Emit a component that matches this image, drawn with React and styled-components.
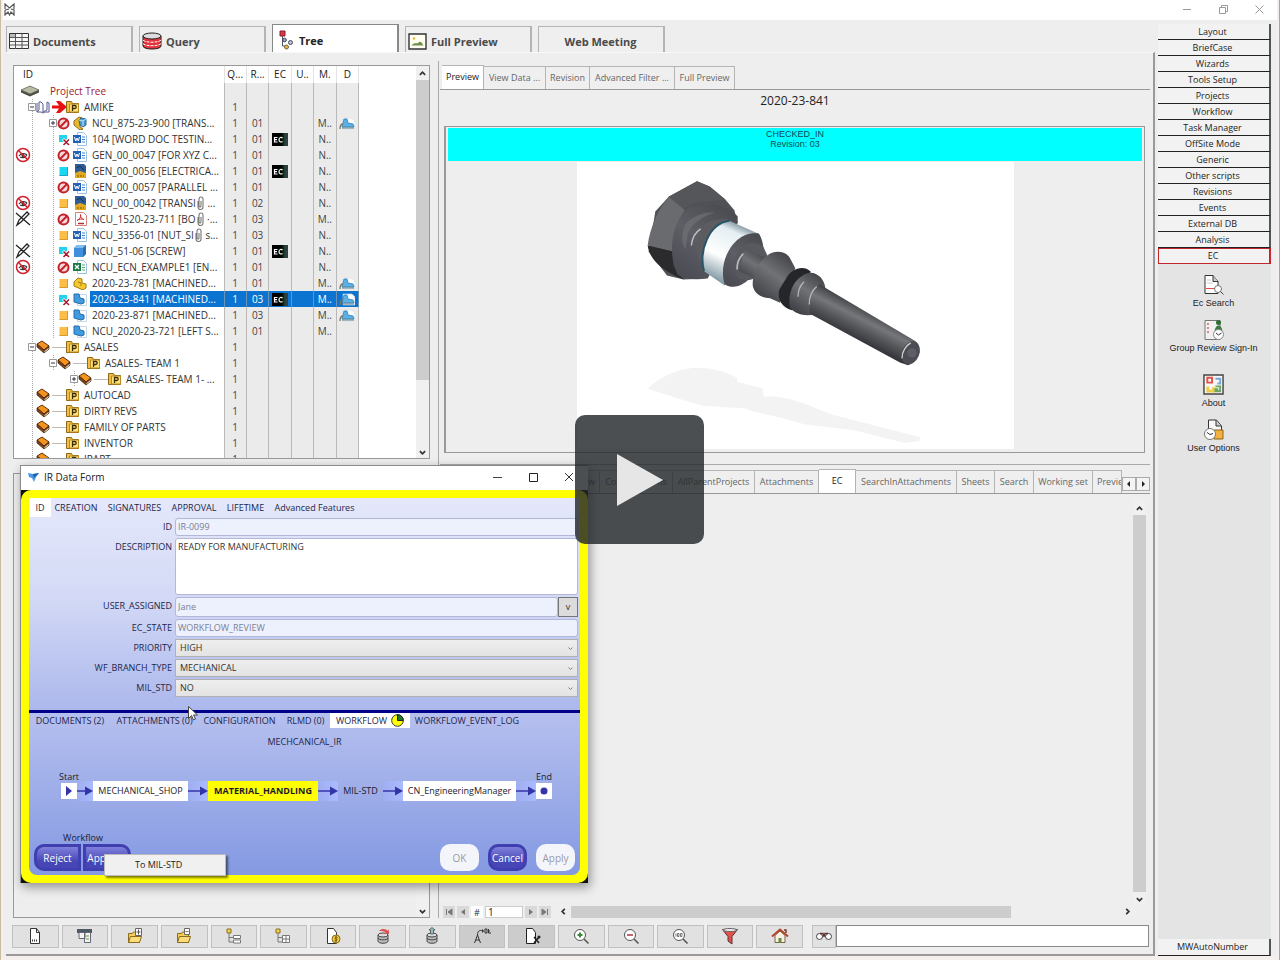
import React from "react";
import styled, { createGlobalStyle, css } from "styled-components";

const ui = '"Open Sans", "Noto Sans", sans-serif';
const plain = '"Liberation Sans", Arial, sans-serif';

const GlobalStyle = createGlobalStyle`
  * { box-sizing: border-box; }
  body { margin: 0; background: #f3e9e6; font-family: ${ui}; font-size: 10px; color: #222; }
  button, input, select, textarea { font: inherit; color: inherit; margin: 0; padding: 0; border-radius: 0; }
  svg { display: block; flex: none; }
`;

/* ---------- window frame ---------- */

const Desktop = styled.div`
  display: flex;
  flex-direction: column;
  min-height: 100vh;
  padding: 0 2px 4px 2px;
  border-left: 1px solid #c9bda4;
  border-right: 1px solid #b99f8d;
  background: #f4efed;
`;
const TitleBar = styled.header`
  display: flex;
  align-items: center;
  justify-content: space-between;
  height: 20px;
  padding: 0 12px 2px 1px;
  background: #fff;
`;
const WindowButtons = styled.div`
  display: flex;
  gap: 24px;
  button { display: grid; place-items: center; width: 12px; height: 16px; border: 0; background: none; }
`;
const Body = styled.div`
  display: flex;
  flex: 1;
  background: #eee;
`;
const Main = styled.main`
  display: flex;
  flex-direction: column;
  flex: 1;
  min-width: 0;
  margin-left: 3px;
`;

const MainTabs = styled.nav`
  display: flex;
  align-items: flex-end;
  gap: 6px;
  height: 32px;
`;
const MainTab = styled.button`
  display: flex;
  align-items: center;
  justify-content: ${(p) => (p.$center ? "center" : "flex-start")};
  gap: 4px;
  width: 127px;
  height: ${(p) => (p.$active ? 28 : 26)}px;
  padding: 3px 3px 0 2px;
  border: solid #b4b4b4;
  border-width: 1px 2px 0 1px;
  background: ${(p) => (p.$active ? "#fff" : "#efefef")};
  color: ${(p) => (p.$active ? "#222" : "#4a4a4a")};
  font-size: 11px;
  font-weight: 700;
  ${(p) => p.$active && css`
    gap: 6px;
    padding-left: 6px;
    border-color: #888;
  `}
`;

const Workspace = styled.section`
  display: grid;
  grid-template-columns: 425px minmax(0, 1fr);
  grid-template-rows: 412px minmax(0, 1fr) 36px;
  flex: 1;
  padding-left: 7px;
  border-top: 1px solid #f8f8f8;
  border-right: 2px solid #999;
  border-bottom: 2px solid #999;
`;

/* ---------- tree ---------- */

const TreePanel = styled.section`
  display: flex;
  height: 394px;
  margin: 12px 8px 0 0;
  border: 1px solid #999;
  background: #fff;
  overflow: hidden;
`;
const TreeScroll = styled.div`
  flex: 1;
  min-width: 0;
  overflow: hidden;
`;
const VScroll = styled.div`
  display: flex;
  flex-direction: column;
  align-items: center;
  justify-content: space-between;
  width: 13px;
  padding: 4px 0 2px;
  background: #f0f0f0;
`;
const VThumb = styled.div`
  flex: ${(p) => (p.$size ? `0 0 ${p.$size}px` : 1)};
  width: 100%;
  margin: 3px 0 ${(p) => (p.$size ? "auto" : "4px")};
  background: #cdcdcd;
`;
const Table = styled.table`
  width: 345px;
  table-layout: fixed;
  border-collapse: collapse;
  th, td { height: 16px; padding: 0; line-height: 16px; white-space: nowrap; overflow: hidden; text-align: center; }
  th { font-weight: 400; border-right: 1px solid #e4e4e4; line-height: 17px; }
  th:first-child { width: 210px; padding-left: 9px; text-align: left; }
  td { background: #ebebeb; border-left: 1px solid #b9b9b9; color: #444; }
  td:first-child { background: none; border-left: 0; text-align: left; }
  td:last-child { border-right: 1px solid #b9b9b9; }
`;
const Row = styled.tr`
  ${(p) => p.$selected && css`
    td:not(:first-child) { background: #0a74d0; color: #fff; border-color: #6c93b8; }
  `}
`;
const Cell = styled.span`
  display: flex;
  justify-content: center;
`;
const NodeLine = styled.div`
  display: flex;
  align-items: center;
  height: 16px;
`;
const Gutter = styled.span`
  width: 14px;
  padding-left: 1px;
  overflow: visible;
`;
const Indent = styled.span`
  align-self: stretch;
  width: 21px;
  background: ${(p) => (p.$line ? "repeating-linear-gradient(#aaa 0 1px, #fff 1px 2px) 4px 0 / 1px 100% no-repeat" : "none")};
`;
const Expander = styled.span`
  align-self: stretch;
  display: flex;
  align-items: center;
  width: 8px;
  background: repeating-linear-gradient(#aaa 0 1px, #fff 1px 2px) 4px 0 / 1px 100% no-repeat;
`;
const Slot = styled.span`
  display: flex;
  width: ${(p) => p.$w}px;
`;
const RootIcon = styled.span`
  width: 32px;
  padding-left: 6px;
`;
const Dash = styled.span`
  width: 14px;
  height: 1px;
  background: #bbb;
`;
const NodeText = styled.span`
  display: flex;
  align-items: center;
  flex: 1;
  height: 16px;
  margin-left: ${(p) => (p.$doc ? 2 : 3)}px;
  padding-left: ${(p) => (p.$doc ? 2 : 1)}px;
  white-space: pre;
  color: ${(p) => (p.$root ? "#a0142c" : p.$selected ? "#fff" : "#333")};
  background: ${(p) => (p.$selected ? "#0a74d0" : "none")};
`;

/* ---------- right pane ---------- */

const RightPane = styled.section`
  display: flex;
  flex-direction: column;
  min-width: 0;
  margin-top: ${(p) => (p.$top ? 8 : 0)}px;
  padding: 4px 3px 0 1px;
  border-left: 1px solid #aaa;
`;
const SubTabs = styled.nav`
  display: flex;
  align-items: flex-end;
  height: 25px;
  padding-left: 2px;
  border-bottom: 1px solid #999;
  overflow: hidden;
`;
const SubTab = styled.button`
  flex: none;
  width: ${(p) => p.$w}px;
  height: ${(p) => (p.$active ? 24 : 23)}px;
  padding: 0 4px 2px;
  border: solid #b4b4b4;
  border-width: 1px 1px 0 0;
  background: ${(p) => (p.$active ? "#fff" : "#efefef")};
  color: ${(p) => (p.$active ? "#222" : "#666")};
  font-size: 9px;
  text-align: ${(p) => p.$align || "center"};
  white-space: nowrap;
  overflow: hidden;
`;
const TabScroll = styled.div`
  display: flex;
  flex: none;
  align-self: flex-end;
  margin-left: auto;
  padding-bottom: 2px;
  button { display: grid; place-items: center; width: 14px; height: 14px; border: 1px solid #aaa; background: #f4f4f4; }
`;
const DocTitle = styled.h1`
  margin: 0;
  height: 36px;
  padding-top: 2px;
  font-size: 12px;
  font-weight: 400;
  line-height: 18px;
  text-align: center;
`;
const Preview = styled.div`
  flex: 1;
  display: flex;
  flex-direction: column;
  margin: 0 5px 11px 4px;
  padding: 1px 2px 2px;
  border: 1px solid #999;
  border-left-width: 2px;
  background: #eee;
  overflow: hidden;
`;
const State = styled.div`
  height: 33px;
  margin-bottom: 1px;
  padding-top: 1px;
  background: #00ffff;
  color: #134a55;
  font: 9px/10px ${plain};
  text-align: center;
`;
const Canvas = styled.div`
  align-self: center;
  width: 437px;
  height: 287px;
  background: #fff;
`;
const Divider = styled.hr`
  width: 100%;
  height: 1px;
  margin: 0;
  border: 0;
  background: #aaa;
`;

const LowerLeft = styled.section`
  display: flex;
  justify-content: flex-end;
  margin: 8px 8px 0 0;
  border: 1px solid #999;
  > div { justify-content: flex-end; }
`;
const Results = styled.div`
  flex: 1;
  display: flex;
  justify-content: flex-end;
  margin: 7px 4px 0 0;
`;
const NavBar = styled.div`
  display: flex;
  align-items: center;
  gap: 2px;
  height: 13px;
  padding: 0 19px 0 3px;
  button { display: grid; place-items: center; width: 12px; height: 12px; border: 0; background: #d9d9d9; color: #333; font-size: 9px; }
  button:nth-of-type(3) { background: #fff; }
  input { width: 38px; height: 12px; border: 1px solid #ccc; padding-left: 2px; background: #fff; }
`;
const HTrack = styled.div`
  flex: 1;
  display: flex;
  align-items: center;
  justify-content: space-between;
  gap: 4px;
  margin-left: 7px;
`;
const HThumb = styled.div`
  width: 77%;
  height: 12px;
  margin-right: auto;
  background: #cdcdcd;
`;

const ToolBar = styled.footer`
  grid-column: 1 / -1;
  display: flex;
  align-items: center;
  gap: 9px;
  margin-left: -1px;
  padding-right: 4px;
`;
const ToolGroup = styled.div`
  display: flex;
  flex: 0 1 791px;
  gap: 3px;
`;
const ToolButton = styled.button`
  display: grid;
  place-items: center;
  flex: ${(p) => (p.$small ? "0 0 24px" : "1 1 0")};
  height: 23px;
  border: 1px solid #c0c0c0;
  background: ${(p) => (p.$pressed ? "#cccccc" : "#e1e1e1")};
`;
const FindBox = styled.div`
  display: flex;
  flex: 1;
  input { flex: 1; min-width: 0; height: 22px; border: 1px solid #888; background: #fff; padding: 0 4px; }
`;

/* ---------- script sidebar ---------- */

const Sidebar = styled.aside`
  display: flex;
  flex-direction: column;
  width: 113px;
  margin: 4px 6px 0 3px;
`;
const SideButton = styled.button`
  height: ${(p) => (p.$last ? 17 : 16)}px;
  padding-right: 2px;
  border: ${(p) => (p.$current ? "1px solid #c1272d" : "0 solid #222")};
  border-right: 2px solid ${(p) => (p.$current ? "#c1272d" : "#555")};
  border-bottom: 1px solid ${(p) => (p.$current ? "#c1272d" : "#222")};
  background: #f2f2f2;
  font-size: 9px;
  line-height: 14px;
`;
const SideBody = styled.div`
  flex: 1;
  display: flex;
  flex-direction: column;
  padding-top: 10px;
  padding-right: 2px;
  background: #e4e4e4;
`;
const SideGroup = styled.div`
  display: flex;
  flex-direction: column;
  margin-bottom: 10px;
`;
const SideLink = styled.button`
  display: flex;
  flex-direction: column;
  align-items: center;
  gap: 2px;
  height: 45px;
  border: 0;
  background: none;
  font: 9px/12px ${plain};
`;

/* ---------- dialog ---------- */

const Dialog = styled.section`
  position: absolute;
  top: 465px;
  left: 20px;
  width: 568px;
  border: 1px solid #8a8a8a;
  border-width: 1px 0 0 1px;
  background: #111;
  box-shadow: 2px 4px 10px rgba(0, 0, 0, 0.4);
  font-size: 9px;
  line-height: 12px;
  color: #22264a;
`;
const DialogBar = styled.header`
  display: flex;
  align-items: center;
  gap: 4px;
  height: 24px;
  padding: 0 13px 2px 7px;
  background: #fff;
  color: #222;
  font-size: 10px;
  button { display: grid; place-items: center; width: 12px; height: 16px; margin-left: 20px; border: 0; background: none; }
  button:first-of-type { margin-left: auto; }
`;
const Frame = styled.div`
  padding: 8px;
  border-radius: 10px;
  background: #ff0;
`;
const FormTop = styled.div`
  height: 212px;
  background: linear-gradient(#e5e8fb, #d4daf6 45%, #acb8ec);
`;
const FormTabs = styled.nav`
  display: flex;
  height: 19px;
`;
const FormTab = styled.button`
  flex: none;
  width: ${(p) => p.$w}px;
  border: 0;
  background: ${(p) => (p.$active ? "#fff" : "none")};
  white-space: nowrap;
`;
const Field = styled.div`
  display: flex;
  height: ${(p) => p.$h || 20}px;
  padding: 1px 2px 1px 0;
  label { width: 146px; padding-right: 3px; line-height: 18px; text-align: right; }
`;
const boxed = css`
  flex: 1;
  min-width: 0;
  border: 1px solid #b4b8d8;
  border-radius: 3px;
  padding: 0 2px;
`;
const TextBox = styled.input`
  ${boxed}
  background: #edf0fd;
  color: #7c7f94;
`;
const Area = styled.textarea`
  ${boxed}
  padding-top: 2px;
  resize: none;
  background: #fff;
  color: #333;
`;
const SelectWrap = styled.span`
  position: relative;
  display: flex;
  flex: 1;
  svg { position: absolute; right: 5px; top: 7px; pointer-events: none; }
`;
const Select = styled.select`
  flex: 1;
  appearance: none;
  border: 1px solid #b0b0b0;
  padding-left: 4px;
  background: linear-gradient(#eeeeee, #e3e3e3);
  color: #333;
`;
const PickButton = styled.button`
  width: 20px;
  border: 1px solid #777;
  background: #dcdcdc;
  color: #333;
`;
const FormBottom = styled.div`
  display: flex;
  flex-direction: column;
  height: 165px;
  padding-bottom: 4px;
  border-top: 3px solid #00008b;
  border-radius: 0 0 8px 8px;
  background: linear-gradient(#b6c0ef, #8499e2);
`;
const LowerTabs = styled.nav`
  display: flex;
  height: 15px;
`;
const LowerTab = styled.button`
  display: flex;
  align-items: center;
  justify-content: center;
  gap: 4px;
  flex: none;
  width: ${(p) => p.$w}px;
  border: 0;
  background: ${(p) => (p.$active ? "#fff" : "none")};
  white-space: nowrap;
`;
const FlowTitle = styled.h2`
  margin: 8px 0 0;
  font-size: 9px;
  font-weight: 400;
  line-height: 12px;
  text-align: center;
`;
const Flow = styled.div`
  display: flex;
  align-items: flex-end;
  margin: 23px 0 0 32px;
`;
const Step = styled.div`
  width: ${(p) => p.$w}px;
  height: 20px;
  line-height: 20px;
  text-align: center;
  white-space: nowrap;
  background: ${(p) => p.$bg || "none"};
  font-weight: ${(p) => (p.$bold ? 700 : 400)};
  color: #1b1b2c;
`;
const EndPoint = styled.figure`
  width: 16px;
  margin: 0;
  display: flex;
  flex-direction: column;
  align-items: center;
  padding-bottom: 2px;
  figcaption { height: 12px; line-height: 12px; color: #1b1b2c; }
  span { display: grid; place-items: center; width: 16px; height: 16px; background: #fff; }
`;
const ArrowBox = styled.div`
  display: grid;
  place-items: center;
  width: ${(p) => p.$w}px;
  height: 20px;
  background: linear-gradient(90deg, rgba(160, 175, 255, 0.3), #a9baff);
`;
const Actions = styled.div`
  display: flex;
  align-items: flex-end;
  gap: 9px;
  margin-top: auto;
  padding: 0 5px;
`;
const ReviewGroup = styled.fieldset`
  display: flex;
  flex-wrap: wrap;
  gap: 0 2px;
  width: 98px;
  margin: 0 auto 0 0;
  padding: 0;
  border: 0;
  legend { padding: 0; margin: 0 auto; line-height: 12px; color: #1b1b2c; }
`;
const Pill = styled.button`
  width: ${(p) => p.$w || 39}px;
  height: 27px;
  border: 3px solid ${(p) => (p.$light ? "#f4f5fb" : "#3f3fb0")};
  border-radius: ${(p) => p.$radius || "10px"};
  background: ${(p) => (p.$light ? "#f4f5fb" : "linear-gradient(#8080dc, #4646b6 70%)")};
  color: ${(p) => (p.$light ? "#9a9aa4" : "#fff")};
  font-size: 10px;
  line-height: 20px;
`;
const Menu = styled.div`
  position: absolute;
  left: 83px;
  top: 388px;
  display: flex;
  width: 122px;
  height: 22px;
  border: 1px solid #bbb;
  background: #f0f0f0;
  box-shadow: 2px 2px 2px rgba(0, 0, 0, 0.5);
  button { flex: 1; border: 0; padding-left: 30px; background: none; text-align: left; color: #222; font-size: 9px; }
`;
const Pointer = styled.svg`
  position: absolute;
  left: 167px;
  top: 240px;
`;
const PlayButton = styled.button`
  position: fixed;
  top: calc(50% - 65px);
  left: calc(50% - 65px);
  display: grid;
  place-items: center;
  width: 129px;
  height: 129px;
  border: 0;
  border-radius: 10px;
  background: rgba(33, 38, 42, 0.81);
`;

/* ---------- icons ---------- */

const Svg = ({ w = 16, h = w, box, children, ...rest }) => (
  <svg width={w} height={h} viewBox={box || `0 0 ${w} ${h}`} fill="none" aria-hidden="true" {...rest}>{children}</svg>
);

const Chevron = ({ dir = "down", size = 7, color = "#333", sw = 2 }) => {
  const d = { down: "M1 2.5 4 5.5 7 2.5", up: "M1 5.5 4 2.5 7 5.5", left: "M5.5 1 2.5 4 5.5 7", right: "M2.5 1 5.5 4 2.5 7" }[dir];
  return <Svg w={size} box="0 0 8 8"><path d={d} stroke={color} strokeWidth={sw} /></Svg>;
};

const statusIcons = {
  no: <Svg w={13} box="0 0 13 13"><circle cx="6.5" cy="6.5" r="5" fill="#f6dada" stroke="#c4202a" strokeWidth="2" /><path d="M3 10 10 3" stroke="#c4202a" strokeWidth="2" /></Svg>,
  cyan: <Svg w={13} box="0 0 13 13"><path d="M2.500 2h8.500v9H2.500z" fill="#19d9f2" /><path d="M10.500 2v8.500h-8" stroke="#17a8c4" /></Svg>,
  amber: <Svg w={13} box="0 0 13 13"><path d="M2.500 2h8.500v9H2.500z" fill="#fbbd45" /><path d="M10.500 2v8.500h-8" stroke="#d79b2c" /></Svg>,
  out: <Svg w={13} box="0 0 13 13"><path d="M2 2h8v7H2z" fill="#22d3ee" /><path d="M6 6l6 6M12 6l-6 6" stroke="#fff" strokeWidth="3" /><path d="M6.500 6.500l5.500 5.500M12 6.500l-5.500 5.500" stroke="#a3182c" strokeWidth="1.500" /></Svg>,
};

const page = <path d="M4.500.5h6l3 3v10h-9z" fill="#fff" stroke="#9cc0e4" />;
const docIcons = {
  asm: <Svg w={14}><path d="M1 5l5-4 3 1-2 3v6l3 2-3 1-6-5z" fill="#e9b92c" stroke="#8c6a12" /><path d="M6 4l2-2 5 1v6l-3 2-3-2z" fill="#4a9bd0" stroke="#276a94" /><path d="M6 4l4 1v5M10 5l3-2" stroke="#bfe2f6" /></Svg>,
  word: <Svg w={14}>{page}<path d="M9 5h3M9 7.500h3M9 10h3" stroke="#3b82d0" /><path d="M0 3h8v8H0z" fill="#2361b8" /><path d="M1.500 5l1.200 4L4 6l1.300 3 1.200-4" stroke="#fff" /></Svg>,
  excel: <Svg w={14}>{page}<path d="M9 5h3M9 7.500h3M9 10h3" stroke="#56a877" /><path d="M0 3h8v8H0z" fill="#187a45" /><path d="M2 5l4 4M6 5L2 9" stroke="#fff" strokeWidth="1.300" /></Svg>,
  dwg: <Svg w={14}><path d="M2 0h9l2 2v12H2z" fill="#2d5d94" /><path d="M2 9l5-2 6 2v5H2z" fill="#e2a91f" /><path d="M4 4l3-2 4 4" stroke="#0d2f57" /><path d="M4 12h7" stroke="#7a5a08" strokeDasharray="2 1" /></Svg>,
  pdf: <Svg w={14}><path d="M2.500.5h8l3 3v10h-11z" fill="#fff" stroke="#d98080" /><path d="M7.500 2.500c.8 2.500-1 5-3.500 6 2-1.500 5-2 7-1-2-.2-4-2-3.500-5z" stroke="#d42a2a" /><path d="M5 11.500h6" stroke="#a33" strokeWidth="1.500" /></Svg>,
  cube: <Svg w={14}><path d="M1 4l3-3h9v9l-3 3H1z" fill="#3f8fdc" /><path d="M1 4l3-3h9l-3 3z" fill="#82bdf0" /><path d="M10 4l3-3v9l-3 3z" fill="#2c6cb4" /></Svg>,
  part: <Svg w={14}><path d="M1 6l4-4 4 1v4l4 1v4l-3 2-9-4z" fill="#f4c92f" stroke="#a47c10" /><path d="M5 6l3 1v3" stroke="#a47c10" /></Svg>,
  draw: <Svg w={14}><path d="M4.500 2.500h9v11h-9z" fill="#fff" stroke="#c7d8e6" /><path d="M1 2h5l1 4 4 1v4L8 12 1 10z" fill="#409be0" stroke="#246ca8" /></Svg>,
};

const Folder = () => (
  <Svg w={14}><path d="M.5 1.500h5l1 2h6v9h-12z" fill="#f1bd42" stroke="#8c6a18" /><path d="M3.500 4h9v8h-9z" fill="#ffe27a" stroke="#b88a20" /><path d="M6.500 11V5.500h2.200a1.500 1.500 0 010 3H6.500" stroke="#3d2c00" strokeWidth="1.300" /></Svg>
);
const Book = () => (
  <Svg w={15}><path d="M1 4l5-3 7 5-5 4z" fill="#f6921e" stroke="#5c3210" /><path d="M1 4v3l7 6 5-4V6l-5 4z" fill="#7a4416" stroke="#3c220c" strokeWidth=".7" /><path d="M8.500 11.700l4-3.200" stroke="#eee" /></Svg>
);
const OpenBook = () => (
  <Svg w={14}><path d="M1 3v9h4l2 1 2-1h4V3l-2-1v8L7 12V4L5 2H3v8l-2 2" stroke="#555a90" /></Svg>
);
const Disk = () => (
  <Svg w={20} h={12}><path d="M1 5l9-4 9 4-9 4z" fill="#b7bba0" stroke="#555" strokeWidth=".7" /><path d="M1 5v2.500l9 4 9-4V5l-9 4z" fill="#4c5044" /></Svg>
);
const RedArrow = () => (
  <Svg w={16} h={14}><path d="M0 5.500h7L4 1h4l7 6-7 6H4l3-4.500H0z" fill="#e81010" /></Svg>
);
const Plus = ({ open }) => (
  <Svg w={8}><path d="M.5.5h7v7h-7z" fill="#fff" stroke="#999" /><path d={open ? "M2 4h4" : "M2 4h4M4 2v4"} stroke="#334" /></Svg>
);
const EyeOff = () => (
  <Svg w={16}><circle cx="8" cy="8" r="6.500" stroke="#d2202c" strokeWidth="1.500" /><path d="M4 9c2-3 6-3 8-1M5 10c2 1 5 1 7-2" stroke="#333" strokeWidth="1.200" /><circle cx="8" cy="8.500" r="1.500" fill="#333" /><path d="M3.500 3.500l9 9" stroke="#d2202c" strokeWidth="1.500" /></Svg>
);
const PenOff = () => (
  <Svg w={16}><path d="M1 2l14 12M2 14l2-5 8-8 2 2-8 8z" stroke="#222" strokeWidth="1.300" /></Svg>
);
const Clip = () => (
  <Svg w={9} h={15}><path d="M2 5v6a2.500 2.500 0 005 0V3a2 2 0 00-4 0v7a1 1 0 002 0V5" stroke="#777" strokeWidth="1.100" /></Svg>
);
const EcBadge = () => (
  <Svg w={16} h={13}>
    <defs><linearGradient id="ecFill"><stop offset=".6" stopColor="#000" /><stop offset=".8" stopColor="#184a28" /><stop offset="1" stopColor="#502a68" /></linearGradient></defs>
    <path d="M0 0h16v13H0z" fill="url(#ecFill)" />
    <path d="M5.500 4.500H2.500v4.500H5.500M2.500 6.700H5M10.500 5c-1-1-3.500-1-3.500 1.700s2.500 2.700 3.500 1.600" stroke="#fff" strokeWidth="1.200" />
  </Svg>
);
const DrawingLink = () => (
  <Svg w={16} h={13}><path d="M4 1h9l3 3v8H4z" fill="#f6fafc" stroke="#cfdbe2" strokeWidth=".6" /><path d="M5 2h3l1 4 5 1 1 3H3z" fill="#5cb0e4" stroke="#2f7db4" strokeWidth=".8" /><path d="M1 12c0-3 1-5 3-5" stroke="#776" strokeWidth="1.300" /><path d="M3 11h12" stroke="#6a7a84" /></Svg>
);

const bigIcons = {
  documents: <Svg w={20} h={16}><path d="M.5.5h19v15H.5z" fill="#f7f7f7" stroke="#333" /><path d="M6.500 1v15M13 1v15M1 4.500h19M1 8.500h19M1 12h19" stroke="#555" /><path d="M1 1h5v3H1z" fill="#bbb" /></Svg>,
  query: <Svg w={20} h={18}><path d="M1 4v10c0 4 18 4 18 0V4" fill="#e2343c" stroke="#222" /><ellipse cx="10" cy="4" rx="9" ry="3" fill="#ddd" stroke="#222" /><path d="M1 8c2 3 16 3 18 0M1 11.500c2 3 16 3 18 0" stroke="#fff" strokeDasharray="3 1" /></Svg>,
  tree: <Svg w={14} h={20}><path d="M1 1h5v5H1z" fill="#d53a48" stroke="#8c1a28" /><path d="M3.500 6v10h3M3.500 10.500H7" stroke="#556" /><circle cx="5.500" cy="10" r="1.800" fill="#9ac" stroke="#445" /><circle cx="11.500" cy="12.500" r="2" fill="#c9c2dd" stroke="#445" /><circle cx="7.500" cy="17" r="2" fill="#f0b63c" stroke="#665" /></Svg>,
  picture: <Svg w={19} h={17}><path d="M1 1h17v15H1z" fill="#fffef0" stroke="#333" strokeWidth="1.400" /><path d="M3.500 12.500c3-4 5-1 7-3s4 1 5 3z" fill="#71904c" /><circle cx="6" cy="5.500" r="1.300" fill="#e8b93c" /></Svg>,
};

const cylinder = <><path d="M4 8v6c0 3 10 3 10 0V8" fill="#bbb" stroke="#444" /><ellipse cx="9" cy="8" rx="5" ry="2" fill="#ddd" stroke="#444" /><path d="M4 11c1 2.500 9 2.500 10 0" stroke="#444" /></>;
const folderArt = <><path d="M2.500 6.500h4l1-1.500h4v1.500h2v9h-11z" fill="#f6cf58" stroke="#8a6c1c" /><path d="M2.500 15.500l2-6h11l-2 6z" fill="#fbdd7c" stroke="#8a6c1c" /></>;
const glass = <><circle cx="8" cy="8" r="5.500" fill="#fff" stroke="#555" /><path d="M12 12l4.500 4.500" stroke="#555" strokeWidth="1.600" /></>;
const tools = [
  ["New document", <><path d="M4.500 1.500h6l3 4v11h-9z" fill="#fff" stroke="#333" /><path d="M10.500 1.500v4h3" stroke="#333" /><path d="M6 13.500h6" stroke="#333" strokeWidth="2" strokeDasharray="1 1" /></>],
  ["Card view", <><path d="M1 2h15v4H1z" fill="#4d5a66" /><path d="M3 5.500h6v6H3zM8.500 5.500h6v10h-6z" fill="#f4f4f4" stroke="#667" /><path d="M10 9h3M10 12h3" stroke="#6a8c3c" /></>],
  ["Add project", <>{folderArt}<path d="M9.500 1.500h6v7h-6z" fill="#fff" stroke="#666" /><path d="M12.500 2.500v5M10.500 5h4" stroke="#555" /></>],
  ["Open project", <>{folderArt}<path d="M9.500 1.500h5v6h-5z" fill="#fff" stroke="#666" /><path d="M10.500 4.500h3" stroke="#966" /></>],
  ["Collapse tree", <><path d="M2 2h4v4H2z" fill="#f5d24c" stroke="#86701c" /><path d="M4 6v9h4M4 10.500h4" stroke="#777" /><path d="M8.500 8.500h7v3h-7zM8.500 13h7v3h-7z" fill="#fff" stroke="#777" /></>],
  ["Expand tree", <><path d="M2 2h4v4H2z" fill="#f5d24c" stroke="#86701c" /><path d="M4 6v9h4M4 10.500h4" stroke="#777" /><path d="M8.500 8.500h7v7h-7zM12 8.500v7M8.500 12h7" fill="#fff" stroke="#777" /></>],
  ["Check price", <><path d="M3.500 1.500h6l3 4v11h-9z" fill="#fff" stroke="#333" /><circle cx="12" cy="12" r="4" fill="#f3c840" stroke="#86701c" /><path d="M13.500 10.500c-3-1.500-3 1.500-1.500 1.500s1.500 2.500-1.500 1.500M12 9v6" stroke="#5c4a10" strokeWidth=".8" /></>],
  ["Check in", <>{cylinder}<path d="M5 4c3-3 7-2 9 0l1-2v5h-5l2-1.500c-2-1.500-4-1.500-7-1.500z" fill="#d9534f" /></>],
  ["Check out", <>{cylinder}<path d="M7.500 7V3H6l3-2.500L12 3h-1.500v4z" fill="#9bb" stroke="#455" strokeWidth=".8" /></>],
  ["Rename", <><path d="M1.500 16l3-8 3 8M3 13h3M4.500 8c0-5 3-5 6-4" stroke="#333" /><path d="M9 2l2 2-2 2" fill="#333" /><path d="M12 2v4h2V2zM15.500 2v4H18M15.500 4H17" stroke="#333" /></>, true],
  ["Remove document", <><path d="M3.500 1.500h6l3 4v11h-9z" fill="#fff" stroke="#222" /><path d="M11 10l5 6M16 10l-5 6" stroke="#222" strokeWidth="1.500" /><circle cx="16" cy="10" r="1.500" fill="#222" /></>, true],
  ["Zoom in", <>{glass}<path d="M8 5.500v5M5.500 8h5" stroke="#3a8a3c" strokeWidth="2" /></>],
  ["Zoom out", <>{glass}<path d="M5 8h6" stroke="#a8343c" strokeWidth="1.500" /></>],
  ["Zoom to 100", <>{glass}<path d="M5 6.500v3M6.500 6.500h1.500v3H6.500zM9.500 6.500H11v3H9.500z" stroke="#555" strokeWidth=".8" /></>],
  ["Filter", <><path d="M1.500 2.500h15L11 9.500V17l-4-3V9.500z" fill="#e0524c" stroke="#5c3030" /><ellipse cx="9" cy="3" rx="7" ry="1.500" fill="#eee" stroke="#666" /></>],
  ["Home", <><path d="M4 8.500v7h10v-7L9 4z" fill="#f6f0e4" stroke="#7a6048" /><path d="M1 9.500L9 2.500l8 7" stroke="#b3442c" strokeWidth="2" /><path d="M7.500 11h3v5h-3z" fill="#6b8a3c" /><path d="M13 3h2v3" stroke="#7a4030" strokeWidth="1.500" /></>],
];

const sideIcons = {
  search: <Svg w={21}><path d="M2 1.500h8l5 6v12H2z" fill="#fff" stroke="#333" /><path d="M10 1.500v6h5" fill="#ccc" stroke="#333" /><path d="M4 6h4M4 9h6" stroke="#ccc" /><path d="M3 14.500h9" stroke="#e04a4a" /><circle cx="15" cy="15" r="3.500" fill="#fff" stroke="#777" /><path d="M17.500 17.500l3 3" stroke="#444" /></Svg>,
  review: <Svg w={21}><path d="M2 1.500h15v19H2z" fill="#f0f0f0" stroke="#777" /><path d="M4 5h2M4 9h2M4 13h2" stroke="#c66" strokeWidth="1.500" /><circle cx="15.500" cy="3.500" r="2.500" fill="#2f6b34" /><path d="M11.500 14c0-10 8-10 8 0z" fill="#3c7a40" /><circle cx="15.500" cy="15.500" r="5" fill="#fff" stroke="#888" /><path d="M13 14l2.500 2 3-2" stroke="#333" /></Svg>,
  about: <Svg w={21} box="0 0 22 22"><path d="M1 1h20v20H1z" fill="#f6f6f2" stroke="#444" strokeWidth="1.500" /><path d="M4.500 4h5v5h-5z" stroke="#e0524c" strokeWidth="2" /><path d="M13 5h5v5h-3" stroke="#7aa7dc" strokeWidth="2" /><path d="M5 13v5h6v-4" stroke="#edcc4c" strokeWidth="3" /><path d="M13 13h5v5h-5v-2h3" stroke="#6aa463" strokeWidth="2" /></Svg>,
  user: <Svg w={21}><path d="M5.500 18V1h8l5 6v10" fill="#f8f8f8" stroke="#333" /><path d="M13 1v6h5" fill="#ccc" stroke="#333" /><path d="M11 11h9v9h-9z" fill="#f3b240" stroke="#8c6418" /><circle cx="7" cy="15" r="5.500" fill="#fff" stroke="#777" /><path d="M4 13.500l3 2 3-1" stroke="#333" /></Svg>,
};

/* ---------- data ---------- */

const columns = ["ID", "Q...", "R...", "EC", "U..", "M.", "D"];
const docs = [
  { status: "no", icon: "asm", name: "NCU_875-23-900 [TRANS...", r: "01", m: "M..", d: true, plus: true },
  { status: "out", icon: "word", name: "104 [WORD DOC TESTIN...", r: "01", m: "N..", ec: true },
  { gutter: "eye", status: "no", icon: "word", name: "GEN_00_0047 [FOR XYZ C...", r: "01", m: "N.." },
  { status: "cyan", icon: "dwg", name: "GEN_00_0056 [ELECTRICA...", r: "01", m: "N..", ec: true },
  { status: "no", icon: "word", name: "GEN_00_0057 [PARALLEL ...", r: "01", m: "N.." },
  { gutter: "eye", status: "amber", icon: "dwg", name: "NCU_00_0042 [TRANSI", tail: " ...", r: "02", m: "N.." },
  { gutter: "pen", status: "no", icon: "pdf", name: "NCU_1520-23-711 [BO", tail: " ·...", r: "03", m: "M.." },
  { status: "amber", icon: "word", name: "NCU_3356-01 [NUT_SI", tail: " s...", r: "03", m: "N.." },
  { gutter: "pen", status: "out", icon: "cube", name: "NCU_51-06 [SCREW]", r: "01", m: "N..", ec: true },
  { gutter: "eye", status: "no", icon: "excel", name: "NCU_ECN_EXAMPLE1 [EN...", r: "01", m: "N.." },
  { status: "amber", icon: "part", name: "2020-23-781 [MACHINED...", r: "01", m: "M..", d: true },
  { status: "out", icon: "draw", name: "2020-23-841 [MACHINED...", r: "03", m: "M..", ec: true, d: true, selected: true },
  { status: "amber", icon: "draw", name: "2020-23-871 [MACHINED...", r: "03", m: "M..", d: true },
  { status: "amber", icon: "draw", name: "NCU_2020-23-721 [LEFT S...", r: "01", m: "M.." },
];
const projects = [
  { name: "ASALES", level: 0, box: "open" },
  { name: "ASALES- TEAM 1", level: 1, box: "open" },
  { name: "ASALES- TEAM 1- ...", level: 2, box: "closed" },
  { name: "AUTOCAD", level: 0 },
  { name: "DIRTY REVS", level: 0 },
  { name: "FAMILY OF PARTS", level: 0 },
  { name: "INVENTOR", level: 0 },
  { name: "IPART", level: 0 },
];
const scripts = ["Layout", "BriefCase", "Wizards", "Tools Setup", "Projects", "Workflow", "Task Manager", "OffSite Mode", "Generic", "Other scripts", "Revisions", "Events", "External DB", "Analysis", "EC"];
const upperTabs = [["Preview", 42, true], ["View Data ...", 62], ["Revision", 44], ["Advanced Filter ...", 85], ["Full Preview", 60]];
const lowerTabs = [["Preview", 158, false, "right"], ["Configurations", 73], ["AllParentProjects", 82], ["Attachments", 64], ["EC", 37, true], ["SearchInAttachments", 101], ["Sheets", 38], ["Search", 39], ["Working set", 59], ["Preview", 29, false, "left"]];
const formTabs = [["ID", 22, true], ["CREATION", 50], ["SIGNATURES", 67], ["APPROVAL", 52], ["LIFETIME", 51], ["Advanced Features", 87]];

const Cells = ({ q, r, ec, m, d }) => (
  <>
    <td>{q}</td>
    <td>{r}</td>
    <td>{ec && <Cell><EcBadge /></Cell>}</td>
    <td />
    <td>{m}</td>
    <td>{d && <Cell><DrawingLink /></Cell>}</td>
  </>
);

const ProjectRow = ({ name, level, box, current }) => (
  <Row>
    <td>
      <NodeLine>
        <Gutter />
        {level > 0 && <Indent $line />}
        {level > 1 && <Indent />}
        <Expander>{box && <Plus open={box === "open"} />}</Expander>
        <Slot $w={16}>{current ? <OpenBook /> : <Book />}</Slot>
        {current ? <Slot $w={14}><RedArrow /></Slot> : <Dash />}
        <Slot $w={14}><Folder /></Slot>
        <NodeText>{name}</NodeText>
      </NodeLine>
    </td>
    <Cells q="1" />
  </Row>
);

const DocRow = ({ doc }) => (
  <Row $selected={doc.selected}>
    <td>
      <NodeLine>
        <Gutter>{doc.gutter === "eye" ? <EyeOff /> : doc.gutter === "pen" ? <PenOff /> : null}</Gutter>
        <Indent $line />
        <Expander>{doc.plus && <Plus />}</Expander>
        <Slot $w={16}>{statusIcons[doc.status]}</Slot>
        <Slot $w={15}>{docIcons[doc.icon]}</Slot>
        <NodeText $doc $selected={doc.selected}>{doc.name}{doc.tail && <><Clip />{doc.tail}</>}</NodeText>
      </NodeLine>
    </td>
    <Cells q="1" r={doc.r} ec={doc.ec} m={doc.m} d={doc.d} />
  </Row>
);

const Bolt = () => (
  <svg width="437" height="287" viewBox="45 9 1311 858" role="img" aria-label="Machined bolt">
    <defs>
      <linearGradient id="shaft" gradientUnits="userSpaceOnUse" x1="930" y1="450" x2="880" y2="550">
        <stop offset="0" stopColor="#3a3c40" /><stop offset=".35" stopColor="#75777b" /><stop offset=".6" stopColor="#55575b" /><stop offset="1" stopColor="#2a2b2e" />
      </linearGradient>
      <linearGradient id="ring" x1=".7" y1="0" x2=".3" y2="1">
        <stop offset="0" stopColor="#58707c" /><stop offset=".2" stopColor="#e4eef2" /><stop offset=".6" stopColor="#fff" /><stop offset="1" stopColor="#6f8b97" />
      </linearGradient>
      <linearGradient id="collar" x1=".8" y1="0" x2=".2" y2="1">
        <stop offset="0" stopColor="#404145" /><stop offset=".45" stopColor="#707276" /><stop offset="1" stopColor="#3a3b40" />
      </linearGradient>
      <linearGradient id="flange" x1=".8" y1="0" x2=".2" y2="1">
        <stop offset="0" stopColor="#4a4b50" /><stop offset=".5" stopColor="#5e5e66" /><stop offset="1" stopColor="#4b4b54" />
      </linearGradient>
    </defs>
    <path d="M258 688C298 646 357 625 413 625c45 2 80 12 112 30l0 12 77 20 3 25c25-6 75 4 115 18 25 8 60 25 90 35l265 68-4 12-45 5-150-38-150-18-60-17-95-22-20-8-130-8-60-18z" fill="#f3f3f3" />
    <path d="M320 112l85-47 38 16 47 39 27 32 10 38-90 166-72 4-50-12-55-72 20-120z" fill="#505156" />
    <path d="M320 112l85-47 38 16 47 39-90 10-42 20z" fill="#55565a" />
    <path d="M320 112c-30 35-57 95-63 146l76 18 18-75 16-50z" fill="#6a6b6f" />
    <path d="M257 258c5 35 30 70 108 102l-30-42-2-42z" fill="#2b2b2e" />
    <path d="M372 150c50-25 110-22 155 20v18l-90 168c-40 6-70 4-90-10-30-60-20-150 25-196z" fill="url(#flange)" />
    <path d="M368 200c10-25 60-45 90-40-35 10-70 35-80 60l-8 50c-12-20-12-45-2-70z" fill="#78787e" opacity=".5" />
    <path d="M420 200c20-15 50-25 80-20-50 20-78 75-72 135-25-8-35-70-8-115z" fill="#5b5b60" />
    <path d="M388 258c2-22 12-40 28-50" stroke="#c4c4c8" strokeWidth="4" fill="none" />
    <path d="M502 184c-62 8-92 90-76 151l62 43 105-154z" fill="url(#ring)" />
    <path d="M502 184c-62 8-92 90-76 151" stroke="#27566a" strokeWidth="6" fill="none" />
    <path d="M590 222c-70-12-125 80-102 152 28 18 60 2 84-26l34-66c-2-28-6-46-16-60z" fill="url(#flange)" />
    <path d="M550 256c15-8 40-8 55 8l12 26-42 68c-20 8-35 2-50-5-18-30-8-75 25-97z" fill="#58585f" />
    <path d="M525 330c0-20 8-38 20-48" stroke="#b8b8be" strokeWidth="5" fill="none" />
    <path d="M548 272l64 22-22 68-60-28z" fill="url(#collar)" />
    <path d="M612 292c20-22 62-20 74 8l14 26-46 104-30-14c-25 0-50-15-52-40 0-35 15-65 40-84z" fill="url(#collar)" />
    <path d="M672 358c14-28 50-44 74-22l-10 40-46 76c-30-6-46-35-38-62z" fill="#25262a" />
    <path d="M742 340c25-2 45 20 48 46l-34 79c-25 6-56 0-72-20-10-45 15-95 58-105z" fill="url(#collar)" />
    <path d="M772 374l284 168c28 16 20 60-18 75l-24-8-270-146c-5-35 5-65 28-89z" fill="url(#shaft)" />
    <path d="M742 435c-2-20 8-42 22-54M708 412c0-22 8-35 18-45" stroke="#b4b4b8" strokeWidth="4" fill="none" />
    <ellipse cx="1046" cy="580" rx="26" ry="36" transform="rotate(22 1046 580)" fill="#4c4d52" />
    <path d="M1020 596c0-20 12-38 26-46" stroke="#d4d4d8" strokeWidth="4" fill="none" />
    <circle cx="1050" cy="580" r="14" fill="#5d5e68" />
  </svg>
);

const Arrow = ({ w }) => (
  <ArrowBox $w={w}><Svg w={w} h={12}><path d={`M0 6h${w - 5}`} stroke="#3434a8" strokeWidth="1.500" /><path d={`M${w - 8} 1.500l8 4.500-8 4.500z`} fill="#3434a8" /></Svg></ArrowBox>
);
const Combo = ({ id, label, value }) => (
  <Field>
    <label htmlFor={id}>{label}</label>
    <SelectWrap>
      <Select id={id} defaultValue={value}><option>{value}</option></Select>
      <Chevron size={5} color="#777" sw={1.5} />
    </SelectWrap>
  </Field>
);

const DataForm = () => (
  <Dialog role="dialog" aria-label="IR Data Form">
    <DialogBar>
      <Svg w={12}><path d="M0 2l5 1 6-1-3 4-2 5-2-4-3-1z" fill="#4a97e6" /><path d="M5 3l6-1-5 5z" fill="#1f5fae" /></Svg>
      <span>IR Data Form</span>
      <button aria-label="Minimize"><Svg w={9}><path d="M0 4.500h9" stroke="#444" /></Svg></button>
      <button aria-label="Maximize"><Svg w={9}><path d="M.5.5h8v8h-8z" stroke="#222" /></Svg></button>
      <button aria-label="Close"><Svg w={10}><path d="M1 1l8 8M9 1L1 9" stroke="#333" /></Svg></button>
    </DialogBar>
    <Frame>
      <FormTop>
        <FormTabs>
          {formTabs.map(([t, w, a]) => <FormTab key={t} $w={w} $active={a}>{t}</FormTab>)}
        </FormTabs>
        <Field><label htmlFor="f-id">ID</label><TextBox id="f-id" readOnly defaultValue="IR-0099" /></Field>
        <Field $h={59}><label htmlFor="f-desc">DESCRIPTION</label><Area id="f-desc" defaultValue="READY FOR MANUFACTURING" /></Field>
        <Field $h={22}><label htmlFor="f-user">USER_ASSIGNED</label><TextBox id="f-user" readOnly defaultValue="Jane" /><PickButton aria-label="Choose user">v</PickButton></Field>
        <Field><label htmlFor="f-state">EC_STATE</label><TextBox id="f-state" readOnly defaultValue="WORKFLOW_REVIEW" /></Field>
        <Combo id="f-pri" label="PRIORITY" value="HIGH" />
        <Combo id="f-wf" label="WF_BRANCH_TYPE" value="MECHANICAL" />
        <Combo id="f-mil" label="MIL_STD" value="NO" />
      </FormTop>
      <FormBottom>
        <LowerTabs>
          <LowerTab $w={82}>DOCUMENTS (2)</LowerTab>
          <LowerTab $w={87}>ATTACHMENTS (0)</LowerTab>
          <LowerTab $w={83}>CONFIGURATION</LowerTab>
          <LowerTab $w={49}>RLMD (0)</LowerTab>
          <LowerTab $w={80} $active>WORKFLOW <Svg w={13}><circle cx="6.500" cy="6.500" r="5.800" fill="#ff0" stroke="#333" /><path d="M6.500 6.500V.7a5.800 5.800 0 015.800 5.800z" fill="#1d7a2c" stroke="#222" /></Svg></LowerTab>
          <LowerTab $w={114}>WORKFLOW_EVENT_LOG</LowerTab>
        </LowerTabs>
        <FlowTitle>MECHCANICAL_IR</FlowTitle>
        <Flow>
          <EndPoint><figcaption>Start</figcaption><span><Svg w={8} h={10}><path d="M1 0l6 5-6 5z" fill="#3434a8" /></Svg></span></EndPoint>
          <Arrow w={16} />
          <Step $w={95} $bg="#fff">MECHANICAL_SHOP</Step>
          <Arrow w={20} />
          <Step $w={110} $bg="#ff0" $bold>MATERIAL_HANDLING</Step>
          <Arrow w={20} />
          <Step $w={45}>MIL-STD</Step>
          <Arrow w={20} />
          <Step $w={113} $bg="#fff">CN_EngineeringManager</Step>
          <Arrow w={20} />
          <EndPoint><figcaption>End</figcaption><span><Svg w={8}><circle cx="4" cy="4" r="3.500" fill="#3434a8" /></Svg></span></EndPoint>
        </Flow>
        <Actions>
          <ReviewGroup>
            <legend>Workflow</legend>
            <Pill $w={47} $radius="10px 0 0 10px">Reject</Pill>
            <Pill $w={48} $radius="0 10px 10px 0">Approve</Pill>
          </ReviewGroup>
          <Pill $light>OK</Pill>
          <Pill>Cancel</Pill>
          <Pill $light>Apply</Pill>
        </Actions>
      </FormBottom>
    </Frame>
    <Menu role="menu"><button role="menuitem">To MIL-STD</button></Menu>
    <Pointer width="10" height="15" viewBox="0 0 10 15" aria-hidden="true"><path d="M.5.5v12l3-3 2 4.500 2-1-2-4h4z" fill="#fff" stroke="#444" /></Pointer>
  </Dialog>
);

const App = () => (
  <>
    <GlobalStyle />
    <Desktop>
      <TitleBar>
        <Svg w={11} h={13}><path d="M1 6V1l4.500 4L10 1v5M1 7v5l3-3 1.500 3L7 9l3 3V7L7 6M1 7l4-1" stroke="#555" strokeWidth="1.200" /></Svg>
        <WindowButtons>
          <button aria-label="Minimize window"><Svg w={9}><path d="M0 4.500h8" stroke="#999" /></Svg></button>
          <button aria-label="Restore window"><Svg w={9}><path d="M.5 2.500h6v6h-6zM2.500 2V.5h6v6H7" stroke="#999" /></Svg></button>
          <button aria-label="Close window"><Svg w={9}><path d="M.5.500l8 8M8.500.500l-8 8" stroke="#999" /></Svg></button>
        </WindowButtons>
      </TitleBar>
      <Body>
        <Main>
          <MainTabs>
            <MainTab>{bigIcons.documents}Documents</MainTab>
            <MainTab>{bigIcons.query}Query</MainTab>
            <MainTab $active>{bigIcons.tree}Tree</MainTab>
            <MainTab>{bigIcons.picture}Full Preview</MainTab>
            <MainTab $center>Web Meeting</MainTab>
          </MainTabs>
          <Workspace>
            <TreePanel>
              <TreeScroll>
                <Table>
                  <thead>
                    <tr>{columns.map((h) => <th key={h} scope="col">{h}</th>)}</tr>
                  </thead>
                  <tbody>
                    <Row>
                      <td><NodeLine><RootIcon><Disk /></RootIcon><NodeText $root>Project Tree</NodeText></NodeLine></td>
                      <Cells />
                    </Row>
                    <ProjectRow name="AMIKE" level={0} box="open" current />
                    {docs.map((d) => <DocRow key={d.name} doc={d} />)}
                    {projects.map((p) => <ProjectRow key={p.name} {...p} />)}
                  </tbody>
                </Table>
              </TreeScroll>
              <VScroll><Chevron dir="up" /><VThumb $size={300} /><Chevron /></VScroll>
            </TreePanel>

            <RightPane $top>
              <SubTabs>
                {upperTabs.map(([t, w, a]) => <SubTab key={t} $w={w} $active={a}>{t}</SubTab>)}
              </SubTabs>
              <DocTitle>2020-23-841</DocTitle>
              <Preview>
                <State>CHECKED_IN<br />Revision: 03</State>
                <Canvas><Bolt /></Canvas>
              </Preview>
              <Divider />
            </RightPane>

            <LowerLeft><VScroll><Chevron /></VScroll></LowerLeft>

            <RightPane>
              <SubTabs>
                {lowerTabs.map(([t, w, a, align], i) => <SubTab key={i} $w={w} $active={a} $align={align}>{t}</SubTab>)}
                <TabScroll>
                  <button aria-label="Scroll tabs left"><Svg w={6}><path d="M4 0v6L1 3z" fill="#222" /></Svg></button>
                  <button aria-label="Scroll tabs right"><Svg w={6}><path d="M2 0v6l3-3z" fill="#222" /></Svg></button>
                </TabScroll>
              </SubTabs>
              <Results><VScroll><Chevron dir="up" /><VThumb /><Chevron /></VScroll></Results>
              <NavBar>
                <button aria-label="First"><Svg w={8}><path d="M1.500 1v6M7 1v6L3 4z" fill="#777" stroke="#777" /></Svg></button>
                <button aria-label="Previous"><Svg w={8}><path d="M6 1v6L2 4z" fill="#777" /></Svg></button>
                <button aria-label="Go to row">#</button>
                <input aria-label="Row number" defaultValue="1" />
                <button aria-label="Next"><Svg w={8}><path d="M2 1v6l4-3z" fill="#777" /></Svg></button>
                <button aria-label="Last"><Svg w={8}><path d="M6.500 1v6M1 1v6l4-3z" fill="#777" stroke="#777" /></Svg></button>
                <HTrack><Chevron dir="left" /><HThumb /><Chevron dir="right" /></HTrack>
              </NavBar>
            </RightPane>

            <ToolBar>
              <ToolGroup>
                {tools.map(([label, art, pressed]) => (
                  <ToolButton key={label} aria-label={label} $pressed={pressed}><Svg w={18}>{art}</Svg></ToolButton>
                ))}
              </ToolGroup>
              <FindBox>
                <ToolButton $small aria-label="Find"><Svg w={16} h={10}><circle cx="3.500" cy="5.500" r="3" fill="#fff" stroke="#444" /><circle cx="12.500" cy="5.500" r="3" fill="#fff" stroke="#444" /><path d="M4 2.500h3l1 2 1-2h3M6.500 5h3" stroke="#633" strokeWidth="1.500" /></Svg></ToolButton>
                <input aria-label="Find text" />
              </FindBox>
            </ToolBar>
          </Workspace>
        </Main>

        <Sidebar>
          {scripts.map((s) => <SideButton key={s} $current={s === "EC"}>{s}</SideButton>)}
          <SideBody>
            <SideGroup>
              <SideLink>{sideIcons.search}Ec Search</SideLink>
              <SideLink>{sideIcons.review}Group Review Sign-In</SideLink>
            </SideGroup>
            <SideGroup>
              <SideLink>{sideIcons.about}About</SideLink>
              <SideLink>{sideIcons.user}User Options</SideLink>
            </SideGroup>
          </SideBody>
          <SideButton $last>MWAutoNumber</SideButton>
        </Sidebar>
      </Body>
    </Desktop>
    <DataForm />
    <PlayButton aria-label="Play video"><Svg w={46} h={52}><path d="M0 0l46 26L0 52z" fill="#e6e6e6" /></Svg></PlayButton>
  </>
);

export default App;
